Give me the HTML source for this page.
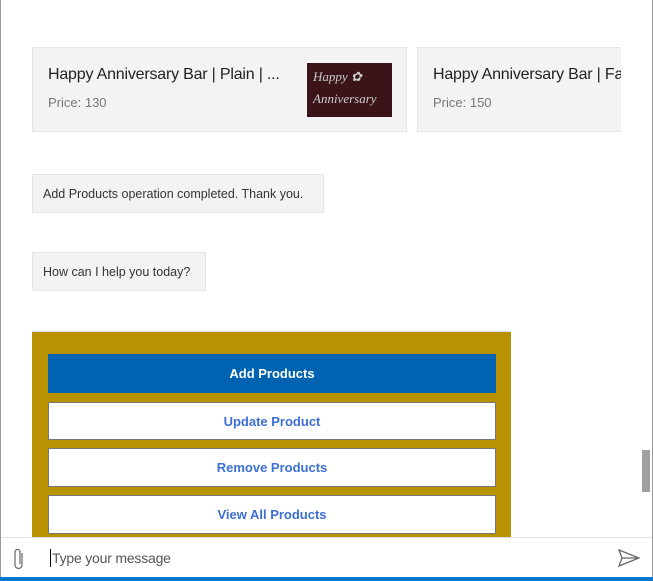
<!DOCTYPE html><html><head><style>
body{margin:0;width:653px;height:581px;overflow:hidden;background:#fff;font-family:"Liberation Sans",sans-serif;position:relative}
.a{position:absolute;box-sizing:border-box}
.card{background:#f3f3f3;border:1px solid #e6e6e6}
.t{font-size:16px;color:#222;white-space:nowrap;letter-spacing:-0.2px}
.p{font-size:13px;color:#777}
.bub{background:#f3f3f3;border:1px solid #e6e6e6;font-size:12.5px;color:#333;padding:0 10px;line-height:38px}
.btn{background:#fff;border:1px solid #777;color:#3b6fd4;font-size:13px;font-weight:bold;text-align:center}
</style></head><body>
<div class="a" style="left:0;top:0;width:1px;height:581px;background:#999"></div>
<div class="a" style="left:652px;top:0;width:1px;height:581px;background:#999"></div>
<div class="a" style="left:0;top:0;width:621px;height:537px;overflow:hidden">
<div class="a card" style="left:32px;top:47px;width:375px;height:85px">
<div class="a t" style="left:15px;top:18px">Happy Anniversary Bar | Plain | ...</div>
<div class="a p" style="left:15px;top:47px">Price: 130</div>
<div class="a" style="left:274px;top:15px;width:85px;height:54px;background:#3a1418"><span style="position:absolute;left:6px;top:3px;color:#ccc;font:italic 13px 'Liberation Serif',serif;line-height:22px">Happy ✿<br>Anniversary</span></div>
</div>
<div class="a card" style="left:417px;top:47px;width:260px;height:85px">
<div class="a t" style="left:15px;top:18px">Happy Anniversary Bar | Fancy</div>
<div class="a p" style="left:15px;top:47px">Price: 150</div>
</div>
<div class="a bub" style="left:32px;top:174px;width:292px;height:39px">Add Products operation completed. Thank you.</div>
<div class="a bub" style="left:32px;top:252px;width:174px;height:39px">How can I help you today?</div>
<div class="a" style="left:32px;top:331px;width:479px;height:220px;background:#b89200;border-top:1px solid #ddd"></div>
<div class="a btn" style="left:48px;top:354px;width:448px;height:39px;background:#0063b1;border:none;color:#fff;line-height:40px">Add Products</div>
<div class="a btn" style="left:48px;top:402px;width:448px;height:38px;line-height:37px">Update Product</div>
<div class="a btn" style="left:48px;top:448px;width:448px;height:39px;line-height:38px">Remove Products</div>
<div class="a btn" style="left:48px;top:495px;width:448px;height:39px;line-height:38px">View All Products</div>
</div>
<div class="a" style="left:642px;top:450px;width:8px;height:42px;background:#a0a0a0"></div>
<div class="a" style="left:1px;top:537px;width:651px;height:40px;background:#fff;border-top:1px solid #e0e0e0"></div>
<svg class="a" style="left:12px;top:547px" width="14" height="24" viewBox="0 0 14 24"><path d="M10 6v12a3.5 3.5 0 0 1-7 0V5a2.5 2.5 0 0 1 5 0v12" fill="none" stroke="#666" stroke-width="1.2"/></svg>
<div class="a" style="left:50px;top:549px;width:1px;height:18px;background:#000"></div>
<div class="a" style="left:52px;top:550px;font-size:14px;color:#555;letter-spacing:-0.2px">Type your message</div>
<svg class="a" style="left:618px;top:549px" width="22" height="18" viewBox="0 0 22 18"><path d="M1 1L21 9L1 17L4 9Z M4 9H21" fill="none" stroke="#666" stroke-width="1.3"/></svg>
<div class="a" style="left:0;top:577px;width:653px;height:4px;background:#0078d4"></div>
</body></html>
